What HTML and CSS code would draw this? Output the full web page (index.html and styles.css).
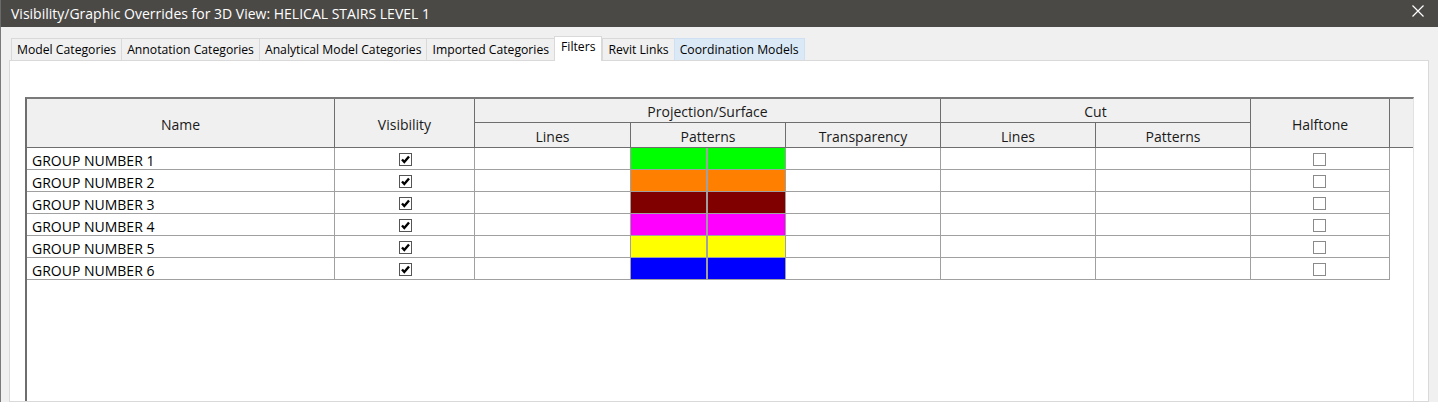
FILE: index.html
```html
<!DOCTYPE html>
<html>
<head>
<meta charset="utf-8">
<link rel="stylesheet" href="styles.css">
</head>
<body>
<div class="titlebar">
  <span class="title">Visibility/Graphic Overrides for 3D View: HELICAL STAIRS LEVEL 1</span>
  <svg class="close" width="12" height="12" viewBox="0 0 12 12"><path d="M0.5 0.5L11.5 11.5M11.5 0.5L0.5 11.5" stroke="#fff" stroke-width="1.2"/></svg>
</div>
<div class="body">
  <div class="tabs">
    <div class="tab">Model Categories</div>
    <div class="tab">Annotation Categories</div>
    <div class="tab">Analytical Model Categories</div>
    <div class="tab">Imported Categories</div>
    <div class="tab active">Filters</div>
    <div class="tab">Revit Links</div>
    <div class="tab hover">Coordination Models</div>
  </div>
  <div class="panel">
    <div class="gridbox">
      <div class="grid">
        <div class="h name r2">Name</div>
        <div class="h vis r2">Visibility</div>
        <div class="h proj">Projection/Surface</div>
        <div class="h cut">Cut</div>
        <div class="h half r2">Halftone</div>
        <div class="h fill r2"></div>
        <div class="h">Lines</div>
        <div class="h">Patterns</div>
        <div class="h">Transparency</div>
        <div class="h">Lines</div>
        <div class="h">Patterns</div>

        <div class="c txt">GROUP NUMBER 1</div><div class="c ctr"><span class="cb on"></span></div><div class="c"></div><div class="c sw" style="--sw:#00ff00"></div><div class="c"></div><div class="c"></div><div class="c"></div><div class="c ctr"><span class="cb"></span></div><div class="f"></div>
        <div class="c txt">GROUP NUMBER 2</div><div class="c ctr"><span class="cb on"></span></div><div class="c"></div><div class="c sw" style="--sw:#ff8000"></div><div class="c"></div><div class="c"></div><div class="c"></div><div class="c ctr"><span class="cb"></span></div><div class="f"></div>
        <div class="c txt">GROUP NUMBER 3</div><div class="c ctr"><span class="cb on"></span></div><div class="c"></div><div class="c sw" style="--sw:#800000"></div><div class="c"></div><div class="c"></div><div class="c"></div><div class="c ctr"><span class="cb"></span></div><div class="f"></div>
        <div class="c txt">GROUP NUMBER 4</div><div class="c ctr"><span class="cb on"></span></div><div class="c"></div><div class="c sw" style="--sw:#ff00ff"></div><div class="c"></div><div class="c"></div><div class="c"></div><div class="c ctr"><span class="cb"></span></div><div class="f"></div>
        <div class="c txt">GROUP NUMBER 5</div><div class="c ctr"><span class="cb on"></span></div><div class="c"></div><div class="c sw" style="--sw:#ffff00"></div><div class="c"></div><div class="c"></div><div class="c"></div><div class="c ctr"><span class="cb"></span></div><div class="f"></div>
        <div class="c txt">GROUP NUMBER 6</div><div class="c ctr"><span class="cb on"></span></div><div class="c"></div><div class="c sw" style="--sw:#0000ff"></div><div class="c"></div><div class="c"></div><div class="c"></div><div class="c ctr"><span class="cb"></span></div><div class="f"></div>
      </div>
    </div>
  </div>
</div>
</body>
</html>
```

FILE: styles.css
```css
* { box-sizing: border-box; }
html, body { margin: 0; padding: 0; }
body {
  width: 1438px;
  height: 402px;
  overflow: hidden;
  background: #f0f0f0;
  font-family: "Open Sans", "Noto Sans", sans-serif;
  color: #000;
}
.titlebar {
  height: 27px;
  background: #4b4946;
  display: flex;
  align-items: center;
  justify-content: space-between;
  padding: 0 14px 0 10px;
  border-left: 1px solid #6a6a6a;
}
.title {
  color: #fff;
  font-size: 14px;
  margin-top: -1px;
}
.close { margin-top: -6px; }
.body {
  padding: 11px 9px 0 8px;
  height: 375px;
  border-left: 1px solid #7a7a7a;
  overflow: hidden;
}
.tabs {
  display: flex;
  align-items: flex-end;
  height: 22px;
  padding-left: 2px;
}
.tab {
  height: 22px;
  padding: 0 5px 0 5px;
  font-size: 12.2px;
  line-height: 21px;
  border: 1px solid #d9d9d9;
  border-bottom: none;
  border-right: none;
  background: #f0f0f0;
  color: #000;
  white-space: nowrap;
}
.tab.active {
  height: 25px;
  background: #fff;
  line-height: 20px;
  padding: 0 6px 0 6px;
  margin-bottom: -1px;
  position: relative;
  z-index: 1;
  border-right: 1px solid #d9d9d9;
}
.tab.hover {
  background: #dbe9f7;
  border-color: #cfe0f2;
  border-right: 1px solid #cfe0f2;
}
.panel {
  background: #fff;
  border: 1px solid #d9d9d9;
  height: 342px;
  width: 1420px;
  padding: 36px 0 0 15px;
  overflow: hidden;
}
.gridbox {
  width: 1389px;
  height: 305px;
  border-left: 2px solid #6e6e6e;
  border-top: 2px solid #7a7a7a;
  border-right: 1px solid #e3e3e3;
  background: #fff;
}
.grid {
  display: grid;
  grid-template-columns: 308px 140px 156px 155px 155px 155px 155px 139px 23px;
  grid-template-rows: 24px 25px repeat(6, 22px);
  font-size: 14px;
}
.h {
  background: #f0f0f0;
  border-right: 1px solid #6e6e6e;
  border-bottom: 1px solid #6e6e6e;
  display: flex;
  align-items: center;
  justify-content: center;
  color: #1a1a1a;
  padding-top: 2px;
}
.h.r2 { grid-row: span 2; }
.h.proj { grid-column: span 3; }
.h.cut { grid-column: span 2; }
.h.fill { border-right: none; }
.c {
  border-right: 1px solid #a0a0a0;
  border-bottom: 1px solid #a0a0a0;
  display: flex;
  align-items: center;
}
.c.txt { padding-left: 5px; padding-top: 3px; }
.c.ctr { justify-content: center; }
.c.sw {
  background: linear-gradient(to right, var(--sw) 0, var(--sw) 75px, #a0a0a0 75px, #a0a0a0 77px, var(--sw) 77px);
}
.f { background: #fff; }
.cb {
  width: 13px;
  height: 13px;
  border: 1px solid #8a8a8a;
  background: #fff;
  display: block;
  margin-left: -2px;
  margin-top: 2px;
}
.cb.on {
  border-color: #555;
  margin-left: 1px;
  background: #fff url("data:image/svg+xml;utf8,<svg xmlns='http://www.w3.org/2000/svg' width='11' height='11' viewBox='0 0 11 11'><path d='M2 5.5 L4.3 8 L9 2.5' fill='none' stroke='black' stroke-width='2.4'/></svg>") center/11px 11px no-repeat;
}
```
